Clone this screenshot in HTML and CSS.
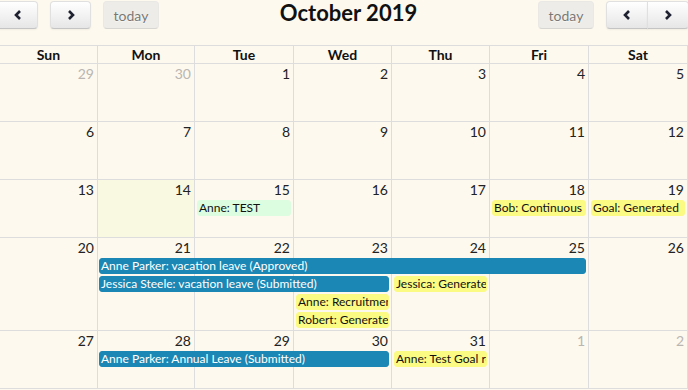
FILE: index.html
```html
<!DOCTYPE html>
<html>
<head>
<meta charset="utf-8">
<link rel="stylesheet" href="styles.css">
</head>
<body>
<div class="toolbar">
  <div class="tb-left">
    <button class="btn solo"><svg class="chev" width="8" height="10" viewBox="0 0 8 10"><polyline points="6,1 2,5 6,9"/></svg></button>
    <button class="btn solo"><svg class="chev" width="8" height="10" viewBox="0 0 8 10"><polyline points="2,1 6,5 2,9"/></svg></button>
    <button class="btn solo disabled">today</button>
  </div>
  <h2 class="title">October 2019</h2>
  <div class="tb-right">
    <button class="btn solo disabled">today</button>
    <div class="group">
      <button class="btn first"><svg class="chev" width="8" height="10" viewBox="0 0 8 10"><polyline points="6,1 2,5 6,9"/></svg></button>
      <button class="btn last"><svg class="chev" width="8" height="10" viewBox="0 0 8 10"><polyline points="2,1 6,5 2,9"/></svg></button>
    </div>
  </div>
</div>

<div class="cal">
  <div class="head">
    <div class="hcell">Sun</div><div class="hcell">Mon</div><div class="hcell">Tue</div><div class="hcell">Wed</div><div class="hcell">Thu</div><div class="hcell">Fri</div><div class="hcell">Sat</div>
  </div>

  <div class="week">
    <div class="day col1 other">29</div><div class="day col2 other">30</div><div class="day col3">1</div><div class="day col4">2</div><div class="day col5">3</div><div class="day col6">4</div><div class="day col7">5</div>
  </div>

  <div class="week">
    <div class="day col1">6</div><div class="day col2">7</div><div class="day col3">8</div><div class="day col4">9</div><div class="day col5">10</div><div class="day col6">11</div><div class="day col7">12</div>
  </div>

  <div class="week">
    <div class="day col1">13</div><div class="day col2 today">14</div><div class="day col3">15</div><div class="day col4">16</div><div class="day col5">17</div><div class="day col6">18</div><div class="day col7">19</div>
    <div class="ev green row2 col3">Anne: TEST</div>
    <div class="ev yellow row2 col6">Bob: Continuous</div>
    <div class="ev yellow row2 col7">Goal: Generated</div>
  </div>

  <div class="week">
    <div class="day col1">20</div><div class="day col2">21</div><div class="day col3">22</div><div class="day col4">23</div><div class="day col5">24</div><div class="day col6">25</div><div class="day col7">26</div>
    <div class="ev blue row2 col2 span5">Anne Parker: vacation leave (Approved)</div>
    <div class="ev blue row3 col2 span3">Jessica Steele: vacation leave (Submitted)</div>
    <div class="ev yellow row3 col5">Jessica: Generated goal</div>
    <div class="ev yellow row4 col4">Anne: Recruitment</div>
    <div class="ev yellow row5 col4">Robert: Generated</div>
  </div>

  <div class="week">
    <div class="day col1">27</div><div class="day col2">28</div><div class="day col3">29</div><div class="day col4">30</div><div class="day col5">31</div><div class="day col6 other">1</div><div class="day col7 other">2</div>
    <div class="ev blue row2 col2 span3">Anne Parker: Annual Leave (Submitted)</div>
    <div class="ev yellow row2 col5">Anne: Test Goal review</div>
  </div>
</div>
</body>
</html>
```

FILE: styles.css
```css
* { box-sizing: border-box; }

html, body {
  margin: 0;
  padding: 0;
  background: #fdf9ef;
  overflow: hidden;
}

body {
  font-family: Lato, "Noto Sans", sans-serif;
  font-size: 14px;
  color: #222;
}

/* toolbar */
.toolbar {
  display: flex;
  align-items: flex-start;
  height: 45px;
  padding-top: 1px;
}

.tb-left {
  display: flex;
  margin-left: -3px;
  gap: 12px;
}

.tb-right {
  display: flex;
  gap: 12px;
  margin-right: -1px;
}

.title {
  flex: 1;
  margin: 0;
  margin-top: -1px;
  text-align: center;
  font-size: 22px;
  line-height: 26px;
  font-weight: 700;
  color: #111;
}

.btn {
  height: 28px;
  margin: 0;
  padding: 0 9px;
  font-family: Lato, "Noto Sans", sans-serif;
  font-size: 14px;
  color: #333;
  background-color: #f5f5f5;
  background-image: linear-gradient(to bottom, #ffffff, #e6e6e6);
  border: 1px solid #e0e0e0;
  border-bottom-color: #c4c4c4;
  box-shadow: inset 0 1px 0 rgba(255,255,255,.2), 0 1px 2px rgba(0,0,0,.05);
  text-shadow: 0 1px 1px rgba(255,255,255,.75);
  display: flex;
  align-items: center;
  justify-content: center;
}

.solo { border-radius: 4px; width: 41px; }
.solo.disabled { width: 56px; }

.disabled {
  background-image: none;
  background-color: #e6e6e6;
  opacity: .65;
  box-shadow: none;
}

.group { display: flex; }
.group .btn { width: 42px; }
.first { border-radius: 4px 0 0 4px; }
.last { border-radius: 0 4px 4px 0; margin-left: -1px; }

.chev polyline {
  fill: none;
  stroke: #1e2230;
  stroke-width: 2.6;
  stroke-linejoin: miter;
}

/* calendar */
.cal {
  margin-left: -1px;
  width: 689px;
  border-right: 1px solid #ddd;
  border-bottom: 1px solid #ddd;
}

.head, .week {
  display: grid;
  grid-template-columns: 98px 97px 99px 98px 98px 99px 99px;
  border-top: 1px solid #ddd;
}

.hcell {
  border-left: 1px solid #ddd;
  height: 17px;
  line-height: 17px;
  text-align: center;
  font-weight: 700;
  color: #111;
}

.week {
  grid-template-rows: 18px auto auto auto auto minmax(2px, 1fr);
  min-height: 58px;
}

.day {
  grid-row: 1 / -1;
  border-left: 1px solid #ddd;
  text-align: right;
  padding: 1px 3px 0 0;
  line-height: 17px;
  color: #222;
}

.day.other { color: #b9b6b1; }
.day.today { background: #f9f8e1; }

.col1 { grid-column-start: 1; }
.col2 { grid-column-start: 2; }
.col3 { grid-column-start: 3; }
.col4 { grid-column-start: 4; }
.col5 { grid-column-start: 5; }
.col6 { grid-column-start: 6; }
.col7 { grid-column-start: 7; }
.span3 { grid-column-end: span 3; }
.span5 { grid-column-end: span 5; }
.row2 { grid-row: 2; }
.row3 { grid-row: 3; }
.row4 { grid-row: 4; }
.row5 { grid-row: 5; }

.ev {
  margin: 2px 2px 0 3px;
  height: 16px;
  line-height: 14px;
  font-size: 12px;
  padding: 0 1px;
  border: 1px solid transparent;
  border-radius: 3px;
  white-space: nowrap;
  overflow: hidden;
  color: #111;
}

.ev.blue { background: #1b87b4; border-color: #1b87b4; color: #fff; margin-left: 2px; }
.ev.yellow { background: #fbfb84; border-color: #fbfb84; }
.ev.green { background: #ddfde0; border-color: #ddfde0; }
```
